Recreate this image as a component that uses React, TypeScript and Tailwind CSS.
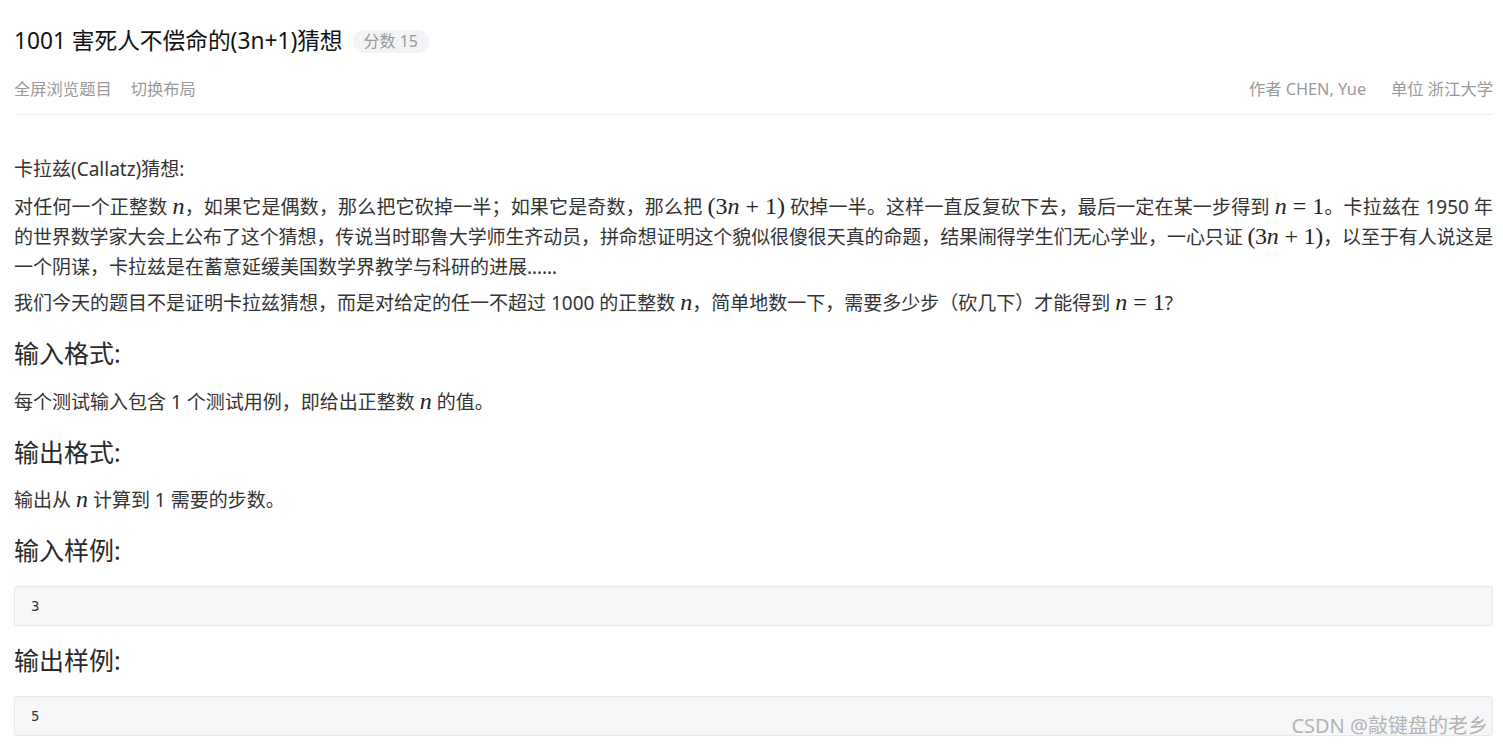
const Tex = ({ children }: { children: React.ReactNode }) => (
  <span className="font-['Liberation_Serif','DejaVu_Serif',serif] text-[24px] leading-none text-[#222]">
    {children}
  </span>
);

const N = () => <i>n</i>;
const Op = ({ c }: { c: string }) => <span className="mx-[6px]">{c}</span>;

function Heading({ children }: { children: React.ReactNode }) {
  return (
    <h3 className="mt-[17px] text-[25px] leading-[36px] text-[#2a2a2a]">
      {children}
    </h3>
  );
}

function Sample({ value }: { value: string }) {
  return (
    <div className="mt-[18px] h-[40px] flex items-center px-[16px] bg-[#f6f7f9] border border-[#e6e8eb] rounded-[3px] font-['DejaVu_Sans_Mono',monospace] text-[14px] text-[#333]">
      {value}
    </div>
  );
}

export default function App() {
  return (
    <div className="relative h-screen overflow-hidden bg-white pl-[14px] pr-[10px] font-['Noto_Sans','Noto_Sans_CJK_SC',sans-serif] text-[#333]">
      <div className="border-b border-[#eceef1] pb-[13px]">
        <div className="mt-[26px] h-[30px] flex items-center">
          <h1 className="text-[22.7px] text-[#111] leading-[30px]">
            1001 害死人不偿命的(3n+1)猜想
          </h1>
          <span className="ml-[10px] h-[23px] px-[11px] flex items-center rounded-full bg-[#f3f4f6] text-[16px] text-[#999]">
            分数 15
          </span>
        </div>
        <div className="mt-[21px] h-[24px] flex items-center justify-between text-[16.3px] text-[#999]">
          <div className="flex gap-[19px]">
            <span>全屏浏览题目</span>
            <span>切换布局</span>
          </div>
          <div className="flex gap-[25px]">
            <span>作者 CHEN, Yue</span>
            <span>单位 浙江大学</span>
          </div>
        </div>
      </div>

      <div className="text-[19px] leading-[30px]">
        <p className="mt-[39px]">卡拉兹(Callatz)猜想:</p>
        <p className="mt-[8px] text-justify">
          对任何一个正整数 <Tex><N /></Tex>，如果它是偶数，那么把它砍掉一半；如果它是奇数，那么把{" "}
          <Tex>(3<N /><Op c="+" />1)</Tex> 砍掉一半。这样一直反复砍下去，最后一定在某一步得到{" "}
          <Tex><N /><Op c="=" />1</Tex>。卡拉兹在 1950 年
          <span className="tracking-[-0.35px]">
            的世界数学家大会上公布了这个猜想，传说当时耶鲁大学师生齐动员，拼命想证明这个貌似很傻很天真的命题，结果闹得学生们无心学业，一心只证{" "}
            <Tex>(3<N /><Op c="+" />1)</Tex>，以至于有人说这是
          </span>
          一个阴谋，卡拉兹是在蓄意延缓美国数学界教学与科研的进展……
        </p>
        <p className="mt-[6px]">
          我们今天的题目不是证明卡拉兹猜想，而是对给定的任一不超过 1000 的正整数 <Tex><N /></Tex>，简单地数一下，需要多少步（砍几下）才能得到{" "}
          <Tex><N /><Op c="=" />1</Tex>?
        </p>

        <Heading>输入格式:</Heading>
        <p className="mt-[16px]">
          每个测试输入包含 1 个测试用例，即给出正整数 <Tex><N /></Tex> 的值。
        </p>

        <Heading>输出格式:</Heading>
        <p className="mt-[15px]">
          输出从 <Tex><N /></Tex> 计算到 1 需要的步数。
        </p>

        <Heading>输入样例:</Heading>
        <Sample value="3" />

        <h3 className="mt-[16px] text-[25px] leading-[36px] text-[#2a2a2a]">输出样例:</h3>
        <Sample value="5" />
      </div>

      <span className="absolute right-[15px] bottom-[6px] text-[20px] leading-[26px] text-[#b3b3b3]">
        CSDN @敲键盘的老乡
      </span>
    </div>
  );
}
